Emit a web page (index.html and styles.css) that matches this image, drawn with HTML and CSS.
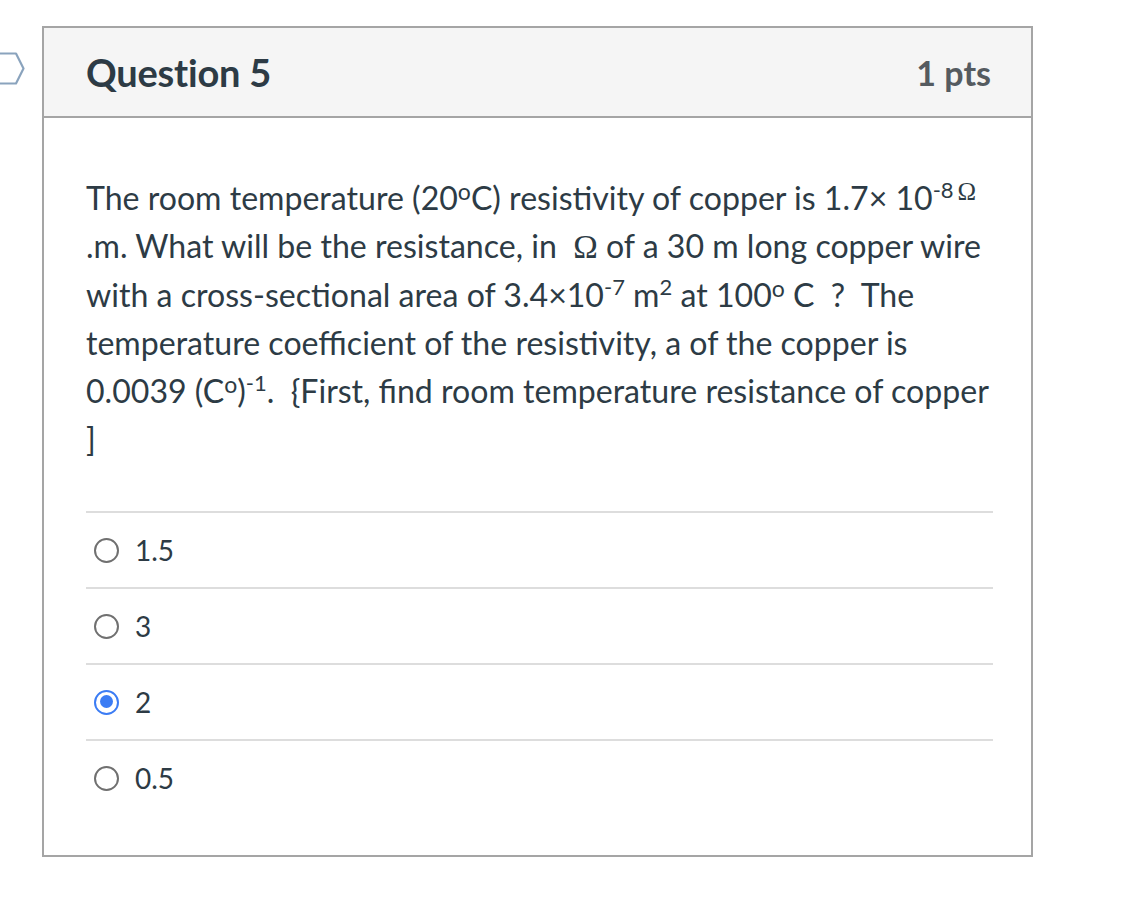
FILE: index.html
```html
<!DOCTYPE html>
<html>
<head>
<meta charset="utf-8">
<link rel="stylesheet" href="styles.css">
</head>
<body>
<div class="page">
  <svg class="flag" width="26" height="34" viewBox="0 0 26 34">
    <path d="M-4 1.5 H16 L23.5 16.5 L16 31.5 H-4" fill="none" stroke="#8aa3bd" stroke-width="2.2" stroke-linejoin="round"/>
  </svg>
  <div class="card">
    <div class="header">
      <h2 class="title">Question 5</h2>
      <div class="pts">1 pts</div>
    </div>
    <div class="body">
      <p class="question">The room temperature (20<sup class="deg">o</sup>C) resistivity of copper is 1.7× 10<sup>-8</sup><sup class="om-s">Ω</sup> .m. What will be the resistance, in &nbsp;<span class="om">Ω</span> of a 30 m long copper wire with a cross-sectional area of 3.4×10<sup>-7</sup> m<sup>2</sup> at 100<sup class="deg">o</sup> C &nbsp;? &nbsp;The temperature coefficient of the resistivity, a of the copper is 0.0039 (C<sup class="deg">o</sup>)<sup>-1</sup>. &nbsp;{First, find room temperature resistance of copper ]</p>
      <div class="answers">
        <label class="answer"><span class="radio"></span><span class="alabel">1.5</span></label>
        <label class="answer"><span class="radio"></span><span class="alabel">3</span></label>
        <label class="answer"><span class="radio checked"></span><span class="alabel">2</span></label>
        <label class="answer"><span class="radio"></span><span class="alabel">0.5</span></label>
      </div>
    </div>
  </div>
</div>
</body>
</html>
```
FILE: styles.css
```css
html, body {
  margin: 0;
  padding: 0;
  background: #fff;
}
body {
  font-family: Lato, "Open Sans", sans-serif;
  color: #2d3b45;
}
.page {
  position: relative;
  width: 1126px;
  height: 904px;
  padding-top: 26px;
  padding-left: 42px;
  box-sizing: border-box;
}
.flag {
  position: absolute;
  left: 0;
  top: 52px;
}
.card {
  width: 991px;
  height: 831px;
  box-sizing: border-box;
  border: 2px solid #a5a5a5;
}
.header {
  display: flex;
  justify-content: space-between;
  align-items: center;
  height: 88px;
  background: #f5f5f5;
  border-bottom: 2px solid #a5a5a5;
  padding: 0 40px 0 42px;
}
.title {
  margin: 0;
  font-size: 38px;
  font-weight: 700;
  color: #2d3b45;
  letter-spacing: -0.2px;
  margin-top: 0;
}
.pts {
  font-size: 34px;
  font-weight: 700;
  color: #555b60;
  margin-top: 0;
}
.body {
  padding: 56px 38px 0 42px;
}
.question {
  margin: 0;
  font-size: 32.1px;
  line-height: 48px;
}
sup {
  font-size: 22px;
  line-height: 1;
  vertical-align: 12px;
}
sup.deg {
  font-size: 23px;
  vertical-align: 10px;
}
.om-s {
  font-family: "Liberation Serif", serif;
  font-size: 25px;
  vertical-align: 10px;
  margin-left: 4px;
}
.om {
  font-family: "Liberation Serif", serif;
  font-size: 33px;
}
.answers {
  margin-top: 48px;
}
.answer {
  display: flex;
  align-items: center;
  height: 74px;
  border-top: 2px solid #dddddd;
  font-size: 28px;
}
.radio {
  width: 25px;
  height: 25px;
  border: 2px solid #707070;
  border-radius: 50%;
  margin-left: 8px;
  margin-right: 16px;
  box-sizing: border-box;
  position: relative;
  flex: none;
}
.radio.checked {
  border: 2.5px solid #3b7cf4;
}
.radio.checked::after {
  content: "";
  position: absolute;
  left: 3.5px;
  top: 3.5px;
  width: 13px;
  height: 13px;
  border-radius: 50%;
  background: #3b7cf4;
}
.alabel {
  line-height: 1;
}
```
